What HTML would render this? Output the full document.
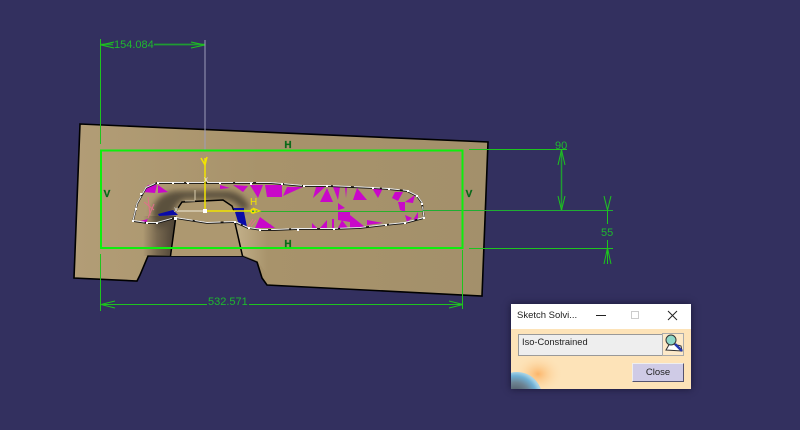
<!DOCTYPE html>
<html><head><meta charset="utf-8"><style>
html,body{margin:0;padding:0;background:#33305f;width:800px;height:430px;overflow:hidden}
svg{position:absolute;left:0;top:0}
#dlg{position:absolute;left:511px;top:304px;width:180px;height:85px;background:#fde3b8;box-shadow:0 0 7px rgba(10,10,30,.65);font-family:"Liberation Sans",sans-serif;font-size:9.500px;color:#222;overflow:hidden}
#tb{position:absolute;left:0;top:0;width:180px;height:25px;background:#fff}
#tt{position:absolute;left:6px;top:6px;font-size:9.500px;white-space:nowrap}
#fld{position:absolute;left:7px;top:30px;width:143px;height:20px;background:#eee;border:1px solid #999}
#fld span{position:absolute;left:3px;top:2px;font-size:9.300px;white-space:nowrap}
#btn{position:absolute;left:121px;top:59px;width:50px;height:17px;background:#cfcbe6;border:1px solid;border-color:#eee #55536f #55536f #eee;text-align:center;line-height:17px}
</style></head><body>
<svg width="800" height="430" viewBox="0 0 800 430" font-family="Liberation Sans,sans-serif">
<defs>
<linearGradient id="pg" x1="0" y1="0" x2="1" y2="0"><stop offset="0" stop-color="#b29d76"/><stop offset=".45" stop-color="#a8936b"/><stop offset="1" stop-color="#a3906b"/></linearGradient>
<linearGradient id="sh" gradientUnits="userSpaceOnUse" x1="143" y1="0" x2="174" y2="0"><stop offset="0" stop-color="#54493a" stop-opacity="0"/><stop offset=".45" stop-color="#54493a" stop-opacity=".6"/><stop offset="1" stop-color="#4e4436" stop-opacity="1"/></linearGradient>
<linearGradient id="hl" gradientUnits="userSpaceOnUse" x1="238" y1="0" x2="268" y2="0"><stop offset="0" stop-color="#c6b48e" stop-opacity=".8"/><stop offset="1" stop-color="#c6b48e" stop-opacity="0"/></linearGradient>
<filter id="b4" x="-30%" y="-50%" width="160%" height="200%"><feGaussianBlur stdDeviation="3"/></filter>
<clipPath id="cp"><path d="M80 124L488 142L482 296L267 285L262 278L257 262L243 256L148 256L140 275L137 281L74 278Z"/></clipPath>
</defs>
<path d="M80 124L488 142L482 296L267 285L262 278L257 262L243 256L148 256L140 275L137 281L74 278Z" fill="url(#pg)" stroke="#000" stroke-width="1.600"/>
<g clip-path="url(#cp)">
<path d="M152 214Q154 194 176 191L228 191Q244 193 250 208L242 210Q234 199 222 199L186 199Q174 201 170 224L158 228Z" fill="#4e4436" opacity=".85" filter="url(#b4)"/>
<path d="M140 216L176 216V256H140Z" fill="url(#sh)"/>
<path d="M171 256L176 219L235 223L243 256Z" fill="#ad9870"/>
<path d="M178 209L183 201L223 200L232 206L235 212L235 223L176 219Z" fill="#ad9870"/>
<path d="M236 225L268 232V275L258 262L243 256Z" fill="url(#hl)"/>
</g>
<path d="M170.500 256L175.500 219M235 223L242.500 256" stroke="#000" stroke-width="1.500" fill="none"/>
<path d="M178 208L182 202L223 200L232 206L234 211" stroke="#000" stroke-width="1.500" fill="none"/>
<g fill="#c908c9">
<path d="M143 192L148 185L157 185L155 193ZM158 185L168 192L158 193Z"/>
<path d="M220 185L230 188L220 189ZM233 185L248 186L243 192ZM250 185L263 185L258 198ZM265 185L282 185L282 197L267 197Z"/>
<path d="M283 196L303 187L287 187ZM313 198L316 187L325 187ZM320 202L327 188L333 202ZM333 187L340 187L338 200ZM345 187L347 187L346 198ZM353 200L357 188L367 200ZM372 188L383 188L378 198ZM392 198L395 192L403 192L398 201ZM405 202L415 195L413 203ZM398 202L405 202L405 212L400 210ZM405 215L412 218L407 222ZM413 220L418 212L418 220Z"/>
<path d="M338 203L345 208L338 210ZM338 211L350 211L350 222L338 220ZM350 215L365 227L350 228ZM338 228L342 220L348 228ZM320 228L327 220L327 228ZM312 223L317 228L312 228ZM332 219L334 219L334 228L332 228ZM367 220L383 223L367 225ZM270 224L275 228L270 228ZM255 228L260 217L275 228Z"/>
<path d="M140 221L148 219L146 223Z"/>
</g>
<g fill="#0a0aa8">
<path d="M158 214L173 210L178 215L159 216Z"/>
<path d="M233 208L244 208L244 212L236 212Z"/>
<path d="M235 212L244 212L247 227L238 222Z"/>
</g>
<path d="M148 197L150 215M144 202L154 210M154 204L148 218" stroke="#e0708a" stroke-width="1" fill="none"/>
<path d="M247 228L253 219M251 226L256 220" stroke="#e0708a" stroke-width="1" fill="none"/>
<path d="M133 221L137 204L146 188L157 183L188 183L270 183L282 184L303 186L327 186L350 187L372 188L388 189L407 191L417 196L422 203L424 218L405 223L385 225L360 228L333 229L298 229L275 230L262 230L248 228L235 222L207 223L188 220L175 218L157 223L147 223Z" fill="none" stroke="#111" stroke-width="1.700"/>
<path transform="translate(0,-.5)" d="M133 221L137 204L146 188L157 183L188 183L270 183L282 184L303 186L327 186L350 187L372 188L388 189L407 191L417 196L422 203L424 218L405 223L385 225L360 228L333 229L298 229L275 230L262 230L248 228L235 222L207 223L188 220L175 218L157 223L147 223Z" fill="none" stroke="#ececec" stroke-width="1" stroke-dasharray="26 2 18 3"/>
<g fill="#fff"><rect x="157" y="182" width="2" height="2"/><rect x="172" y="182" width="2" height="2"/><rect x="187" y="182" width="2" height="2"/><rect x="219" y="182" width="2" height="2"/><rect x="250" y="183" width="2" height="2"/><rect x="281" y="183" width="2" height="2"/><rect x="303" y="185" width="2" height="2"/><rect x="326" y="185" width="2" height="2"/><rect x="372" y="187" width="2" height="2"/><rect x="388" y="188" width="2" height="2"/><rect x="407" y="190" width="2" height="2"/><rect x="416" y="195" width="2" height="2"/><rect x="421" y="203" width="2" height="2"/><rect x="423" y="217" width="2" height="2"/><rect x="404" y="222" width="2" height="2"/><rect x="385" y="224" width="2" height="2"/><rect x="333" y="228" width="2" height="2"/><rect x="297" y="229" width="2" height="2"/><rect x="259" y="229" width="2" height="2"/><rect x="248" y="227" width="2" height="2"/><rect x="234" y="221" width="2" height="2"/><rect x="174" y="217" width="3" height="3"/><rect x="156" y="222" width="2" height="2"/><rect x="146" y="222" width="2" height="2"/><rect x="132" y="220" width="2" height="2"/><rect x="135" y="208" width="2" height="2"/><rect x="140" y="193" width="2" height="2"/></g>
<g stroke="#1ec41e" stroke-width="1" fill="none">
<path d="M100.500 39V144M100.500 254V311"/>
<path d="M101 44.500H113M154 44.500H205" stroke="#1f9c32" stroke-width="1.800"/>
<path d="M101 45L114 42M101 45L114 48M205 45L191 42M205 45L191 48"/>
<path d="M100 304.500H207M249 304.500H463"/>
<path d="M101 304.500L115 301M101 304.500L115 308M463 304.500L449 301M463 304.500L449 308"/>
<path d="M462.500 250V309"/>
<path d="M469 149.500H567"/>
<path d="M561.500 150V210" stroke="#1f9c32" stroke-width="1.500"/>
<path d="M558 165L561.500 150L565 165M558 196L561.500 210L565 196"/>
<path d="M423 210.500H613" stroke="#1fae32"/>
<path d="M469 248.500H613M607.500 210V224M607.500 240V264M604 196L607.500 210L611 196M604 264L607.500 248L611 264"/>
<path d="M244 211.500H423" stroke="#2ab02a"/>
</g>
<path d="M205 40V150" stroke="#9c9cb8" stroke-width="1"/>
<rect x="101" y="150.500" width="361.500" height="97.500" fill="none" stroke="#0eee0e" stroke-width="2"/>
<g fill="#1fb82f" font-size="11">
<text x="114" y="48">154.084</text>
<text x="208" y="305">532.571</text>
<text x="555" y="149">90</text>
<text x="601" y="236">55</text>
</g>
<g font-size="10" font-weight="bold" fill="#0a6a14" stroke="#062" stroke-width=".3" text-anchor="middle">
<text x="288" y="148">H</text><text x="288" y="247">H</text><text x="107" y="197">V</text><text x="469" y="197">V</text>
</g>
<g stroke="#f2e400" stroke-width="1.500" fill="none">
<path d="M205 165V211H252"/>
<path d="M205 158L205 165M201 158L205 165L207 157"/>
<circle cx="253" cy="211" r="2"/>
<path d="M253 208L260 211L253 213" stroke-width="1"/>
</g>
<text x="250" y="205" font-size="10" fill="#f2e400">H</text>
<text x="204" y="182" font-size="8" fill="#eee">x</text>
<path d="M178 211H205" stroke="#d3c7ac" stroke-width="1.800"/>
<path d="M195 200V190" stroke="#c9bca0" stroke-width="1.200"/>
<path d="M185 201H195" stroke="#c9bca0" stroke-width="1"/>
<rect x="203" y="209" width="4" height="4" fill="#fff"/>
<text x="174" y="212" font-size="8" fill="#ddd">x</text>
</svg>
<div id="dlg">
<div id="tb"><span id="tt">Sketch Solvi...</span>
<svg width="180" height="25" style="left:0;top:0"><path d="M85 11.500H95" stroke="#222"/><rect x="120.500" y="7.500" width="7" height="7" fill="none" stroke="#ccc"/><path d="M157 7L166 16M166 7L157 16" stroke="#222" fill="none"/></svg>
</div>
<div id="fld"><span>Iso-Constrained</span></div>
<svg width="180" height="85" style="left:0;top:0">
<defs><radialGradient id="gl" cx=".5" cy=".5" r=".5"><stop offset="0" stop-color="#fba64f" stop-opacity=".75"/><stop offset="1" stop-color="#fde3b8" stop-opacity="0"/></radialGradient>
<radialGradient id="gb" gradientUnits="userSpaceOnUse" cx="4" cy="94" r="26"><stop offset="0" stop-color="#3e4048"/><stop offset=".6" stop-color="#6d8494"/><stop offset=".85" stop-color="#6fb0d4"/><stop offset="1" stop-color="#a6d3e6"/></radialGradient></defs>
<rect x="151.500" y="29.500" width="21" height="22" fill="#fde9c8" stroke="#aaa"/>
<path d="M155 46L159 39L170 42L171 47Z" fill="#fff" stroke="#333"/>
<circle cx="160" cy="36" r="5" fill="#8fd8c8" stroke="#333"/><path d="M164 40L171 47" stroke="#2438b0" stroke-width="2.500"/>
<rect x="2" y="50" width="50" height="40" fill="url(#gl)"/>
<circle cx="6" cy="93" r="25" fill="url(#gb)"/>
</svg>
<div id="btn">Close</div>
</div>
</body></html>
